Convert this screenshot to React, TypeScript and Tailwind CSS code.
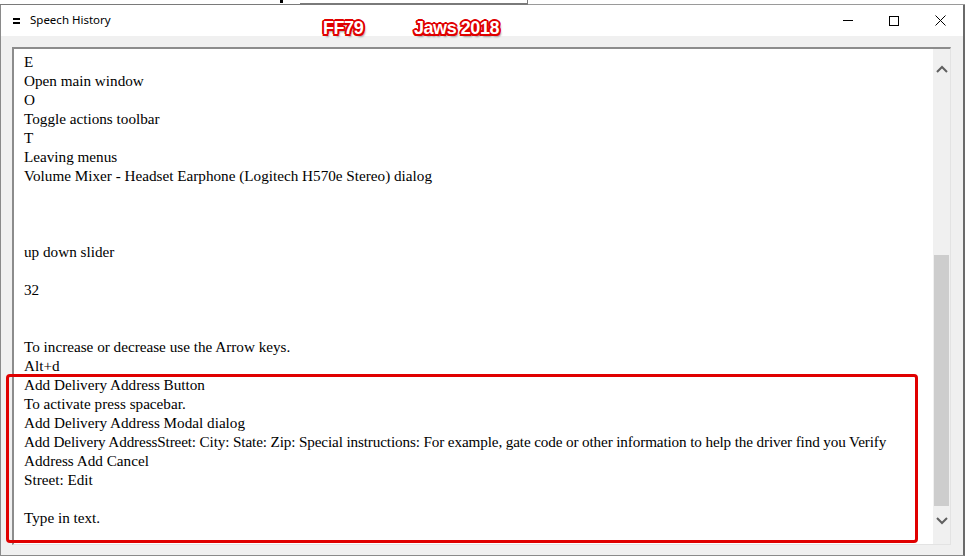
import React from 'react';

const lines: string[] = [
  'E',
  'Open main window',
  'O',
  'Toggle actions toolbar',
  'T',
  'Leaving menus',
  'Volume Mixer - Headset Earphone (Logitech H570e Stereo) dialog',
  '',
  '',
  '',
  'up down slider',
  '',
  '32',
  '',
  '',
  'To increase or decrease use the Arrow keys.',
  'Alt+d',
  'Add Delivery Address Button',
  'To activate press spacebar.',
  'Add Delivery Address Modal dialog',
  'Add Delivery AddressStreet: City: State: Zip: Special instructions: For example, gate code or other information to help the driver find you Verify',
  'Address Add Cancel',
  'Street: Edit',
  '',
  'Type in text.',
];

const Label: React.FC<{ text: string; className?: string }> = ({ text, className }) => (
  <span
    className={`absolute top-[10px] text-[18px] leading-[27px] font-bold text-white tracking-tight ${className ?? ''}`}
    style={{
      fontFamily: '"Liberation Sans", Arial, sans-serif',
      textShadow:
        '-2px 0 0 #e00000, 2px 0 0 #e00000, 0 -2px 0 #e00000, 0 2px 0 #e00000, -1.5px -1.5px 0 #e00000, 1.5px 1.5px 0 #e00000, -1.5px 1.5px 0 #e00000, 1.5px -1.5px 0 #e00000, 2px 3px 2px #999',
    }}
  >
    {text}
  </span>
);

const App: React.FC = () => {
  return (
    <div className="relative w-[965px] h-[559px] overflow-hidden bg-white" style={{ fontFamily: '"Noto Sans", "Open Sans", sans-serif' }}>
      {/* window behind */}
      <div className="h-[5px] flex">
        <div className="w-[300px] border-b border-[#7a7a7a] relative">
          <div className="absolute left-[280px] top-0 w-[3px] h-[3px] bg-black" />
        </div>
        <div className="w-[228px] border-b-2 border-r border-[#7a7a7a]" />
        <div className="flex-1 border-b border-[#9a9a9a]" />
      </div>

      {/* Speech History window */}
      <div className="h-[551px] border-l border-r-2 border-b border-[#8a8a8a] border-r-[#6a6a6a] flex flex-col">
        <div className="h-[31px] bg-white flex items-center relative">
          <div className="w-[12px] ml-[12px] flex flex-col gap-[2px]">
            <div className="h-[2px] w-[7px] bg-black" />
            <div className="h-[2px] w-[7px] bg-black" />
          </div>
          <span className="text-[11.5px] text-black ml-[5px] mt-[-2px]">Speech History</span>
          <div className="ml-auto flex items-center h-full">
            <div className="w-[46px] h-full flex items-center justify-center">
              <div className="w-[10px] h-px bg-black" />
            </div>
            <div className="w-[46px] h-full flex items-center justify-center">
              <div className="w-[10px] h-[10px] border border-black" />
            </div>
            <div className="w-[46px] h-full flex items-center justify-center">
              <svg width="11" height="11" viewBox="0 0 11 11">
                <path d="M0.5 0.5 L10.5 10.5 M10.5 0.5 L0.5 10.5" stroke="#000" strokeWidth="1" />
              </svg>
            </div>
          </div>
          <Label text="FF79" className="left-[322px]" />
          <Label text="Jaws 2018" className="left-[413px]" />
        </div>

        <div className="flex-1 bg-[#f0f0f0] pt-[11px] pl-[11px] pr-[12px] pb-[10px] flex">
          <div className="flex-1 flex bg-white border-t-2 border-l-2 border-t-[#8c8c8c] border-l-[#8c8c8c] border-r border-b border-r-[#e3e3e3] border-b-[#e3e3e3]">
            <div
              className="flex-1 min-w-0 overflow-hidden pl-[10px] pt-[3px] text-[15.2px] leading-[19px] text-black"
              style={{ fontFamily: '"Liberation Serif", "Times New Roman", serif' }}
            >
              {lines.map((l, i) => (
                <div key={i} className={`h-[19px] whitespace-nowrap ${l.length > 100 ? 'tracking-[-0.13px]' : ''}`}>
                  {l}
                </div>
              ))}
            </div>
            <div className="w-[17px] shrink-0 bg-[#f0f0f0] flex flex-col">
              <div className="h-[40px] flex items-center justify-center">
                <svg width="12" height="8" viewBox="0 0 12 8">
                  <path d="M1 7 L6 2 L11 7" stroke="#606060" strokeWidth="2" fill="none" />
                </svg>
              </div>
              <div className="h-[166px]" />
              <div className="mx-[1px] h-[251px] bg-[#cdcdcd]" />
              <div className="h-[30px] flex items-center justify-center">
                <svg width="12" height="8" viewBox="0 0 12 8">
                  <path d="M1 1 L6 6 L11 1" stroke="#606060" strokeWidth="2" fill="none" />
                </svg>
              </div>
            </div>
          </div>
        </div>
      </div>

      {/* annotation */}
      <div className="absolute left-[6px] top-[374px] w-[912px] h-[169px] border-[3px] border-[#e00000] rounded-[4px]" />
    </div>
  );
};

export default App;
